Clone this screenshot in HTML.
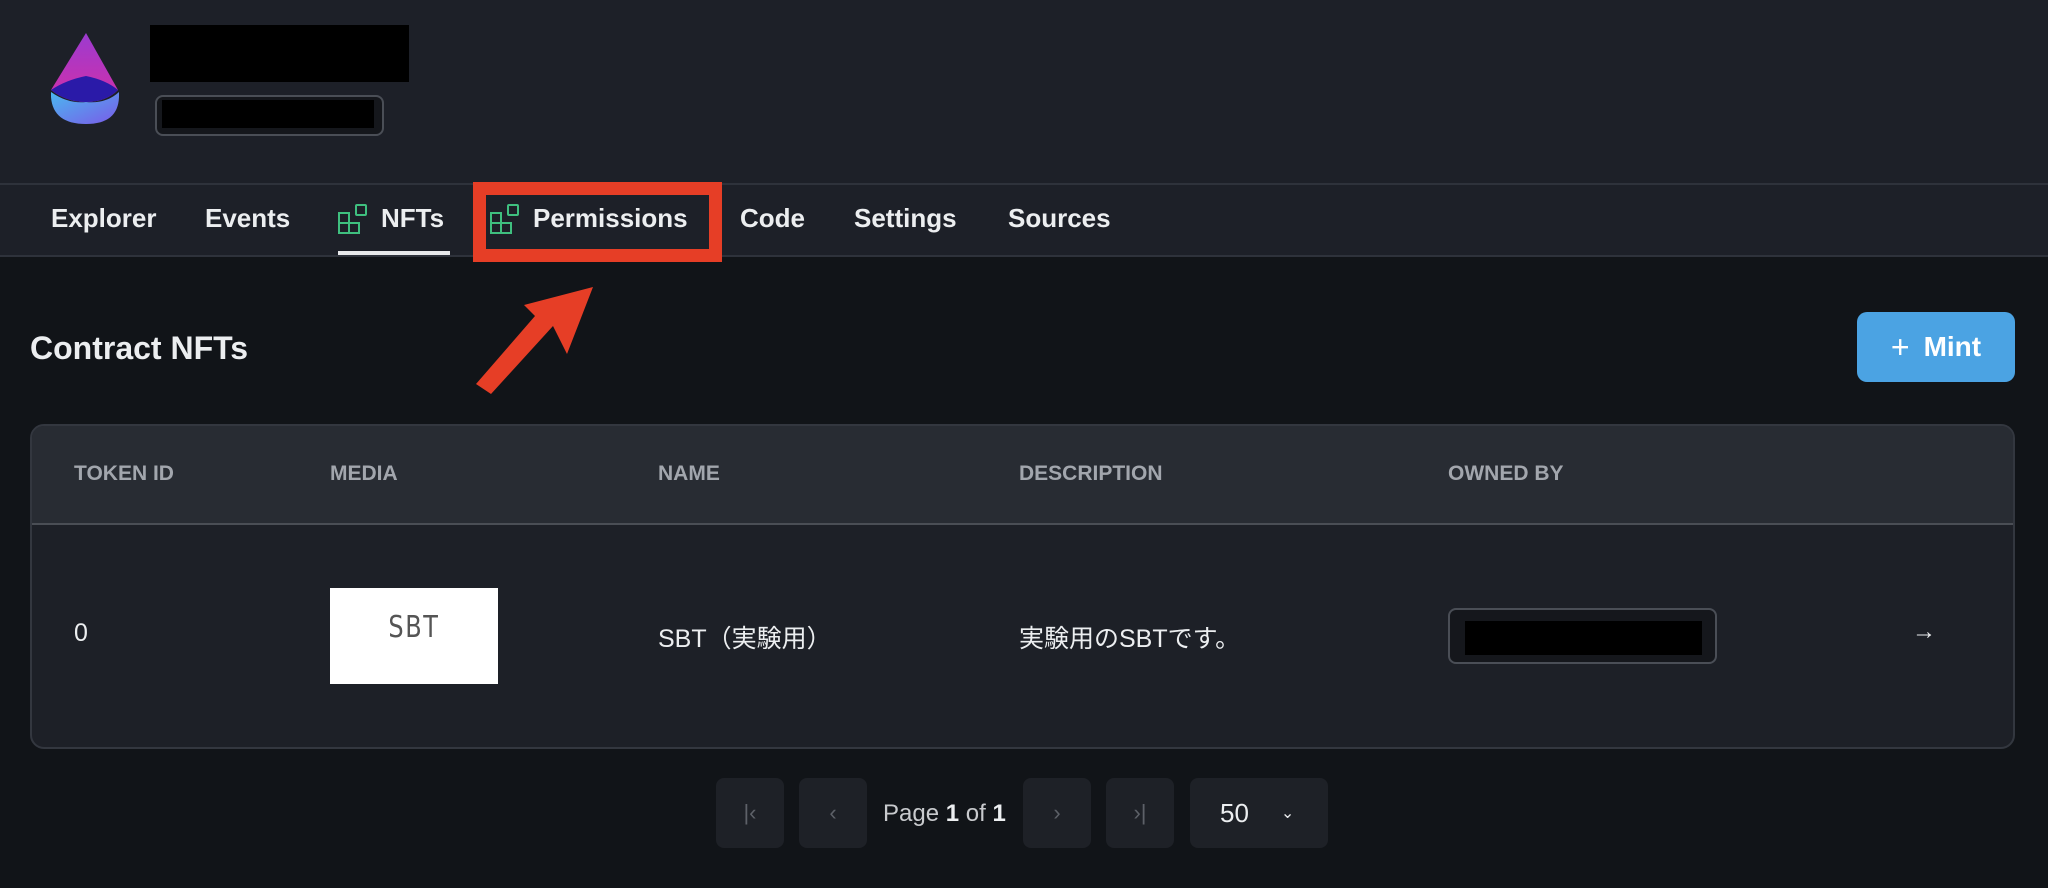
<!DOCTYPE html>
<html><head><meta charset="utf-8"><style>
*{margin:0;padding:0;box-sizing:border-box}
body{width:2048px;height:888px;background:#111418;font-family:"Liberation Sans","Noto Sans CJK JP",sans-serif;color:#e8e9eb;position:relative;overflow:hidden}
.abs{position:absolute}
.hdr{left:0;top:0;width:2048px;height:256px;background:#1d2028}
.line{left:0;width:2048px;height:2px;background:#2e323b}
.tab{top:203px;font-size:26px;font-weight:700;color:#eceef0;white-space:nowrap}
.th{top:462px;font-size:21px;font-weight:700;color:#a2a6ad}
.td{top:619px;font-size:25px;color:#eceef0;white-space:nowrap}
.pb{top:778px;width:68px;height:70px;background:#1e2127;border-radius:8px;color:#5d6168;font-size:22px;display:flex;align-items:center;justify-content:center}
</style></head><body>
<div class="abs hdr"></div>
<div class="abs line" style="top:183px"></div>
<div class="abs line" style="top:255px"></div>
<svg class="abs" style="left:48px;top:32px" width="78" height="94" viewBox="0 0 78 94">
<defs><linearGradient id="g1" x1="0" y1="0" x2="0" y2="1"><stop offset="0" stop-color="#9b3bd0"/><stop offset="1" stop-color="#d22fa8"/></linearGradient>
<linearGradient id="g2" x1="0" y1="0" x2="1" y2="1"><stop offset="0" stop-color="#4ab8f0"/><stop offset="1" stop-color="#7a5ae8"/></linearGradient></defs>
<path d="M38 1 L70 58 Q58 70 38 70 Q18 70 3 58 Z" fill="url(#g1)"/>
<path d="M3 58 Q18 48 38 44 Q58 48 70 58 Q58 70 38 70 Q18 70 3 58Z" fill="#2a1aa8"/>
<path d="M3 60 Q20 72 38 70 Q58 72 71 60 L71 65 Q70 92 38 92 Q5 92 3 65Z" fill="url(#g2)"/>
</svg>
<div class="abs" style="left:150px;top:25px;width:259px;height:57px;background:#000"></div>
<div class="abs" style="left:155px;top:95px;width:229px;height:41px;border:2px solid #4a4e56;border-radius:8px;background:#15171c"></div>
<div class="abs" style="left:162px;top:100px;width:212px;height:28px;background:#000"></div>

<div class="abs tab" style="left:51px">Explorer</div>
<div class="abs tab" style="left:205px">Events</div>
<svg class="abs" style="left:337px;top:203px" width="32" height="32" viewBox="0 0 32 32" fill="none" stroke="#3fbf7f" stroke-width="2"><rect x="2" y="10" width="10" height="10"/><rect x="2" y="20" width="10" height="10"/><rect x="12" y="20" width="10" height="10"/><rect x="19" y="2" width="10" height="10" rx="1"/></svg>
<div class="abs tab" style="left:381px">NFTs</div>
<div class="abs" style="left:338px;top:251px;width:112px;height:4px;background:#e8e9eb"></div>
<svg class="abs" style="left:489px;top:203px" width="32" height="32" viewBox="0 0 32 32" fill="none" stroke="#3fbf7f" stroke-width="2"><rect x="2" y="10" width="10" height="10"/><rect x="2" y="20" width="10" height="10"/><rect x="12" y="20" width="10" height="10"/><rect x="19" y="2" width="10" height="10" rx="1"/></svg>
<div class="abs tab" style="left:533px">Permissions</div>
<div class="abs tab" style="left:740px">Code</div>
<div class="abs tab" style="left:854px">Settings</div>
<div class="abs tab" style="left:1008px">Sources</div>
<div class="abs" style="left:473px;top:182px;width:249px;height:80px;border:13px solid #e63e26"></div>
<svg class="abs" style="left:470px;top:280px" width="140" height="120" viewBox="470 280 140 120"><polygon points="593,287 567,354 553,326 491,394 476,384 535,316 524,305" fill="#e63e26"/></svg>

<div class="abs" style="left:30px;top:330px;font-size:32px;font-weight:700;color:#eceef0">Contract NFTs</div>
<div class="abs" style="left:1857px;top:312px;width:158px;height:70px;background:#4ba3e3;border-radius:10px;color:#fff;font-size:28px;font-weight:700;display:flex;align-items:center;justify-content:center"><span style="font-weight:400;font-size:32px;margin-right:14px">+</span>Mint</div>

<div class="abs" style="left:30px;top:424px;width:1985px;height:325px;background:#1d2027;border:2px solid #33373f;border-radius:14px;overflow:hidden">
<div style="height:99px;background:#282c33;border-bottom:2px solid #4a4e55"></div></div>
<div class="abs th" style="left:74px">TOKEN ID</div>
<div class="abs th" style="left:330px">MEDIA</div>
<div class="abs th" style="left:658px">NAME</div>
<div class="abs th" style="left:1019px">DESCRIPTION</div>
<div class="abs th" style="left:1448px">OWNED BY</div>
<div class="abs td" style="left:74px">0</div>
<div class="abs" style="left:330px;top:588px;width:168px;height:96px;background:#fff;color:#555;font-size:30px;font-weight:400;font-family:'DejaVu Sans',sans-serif;transform-origin:left top;text-align:center;padding-top:22px;letter-spacing:2px"><span style="display:inline-block;transform:scaleX(0.8)">SBT</span></div>
<div class="abs td" style="left:658px">SBT（実験用）</div>
<div class="abs td" style="left:1019px">実験用のSBTです。</div>
<div class="abs" style="left:1448px;top:608px;width:269px;height:56px;border:2px solid #4a4e56;border-radius:8px;background:#15171c"></div>
<div class="abs" style="left:1465px;top:621px;width:237px;height:34px;background:#000"></div>
<div class="abs td" style="left:1912px;top:618px;font-size:24px">→</div>

<div class="abs pb" style="left:716px">|‹</div>
<div class="abs pb" style="left:799px">‹</div>
<div class="abs" style="left:883px;top:800px;font-size:24px;color:#c8cacd">Page <b style="color:#eceef0">1</b> of <b style="color:#eceef0">1</b></div>
<div class="abs pb" style="left:1023px">›</div>
<div class="abs pb" style="left:1106px">›|</div>
<div class="abs pb" style="left:1190px;width:138px;color:#eceef0;font-size:26px;justify-content:flex-start;padding-left:30px">50<span style="font-size:16px;margin-left:32px">⌄</span></div>
</body></html>
